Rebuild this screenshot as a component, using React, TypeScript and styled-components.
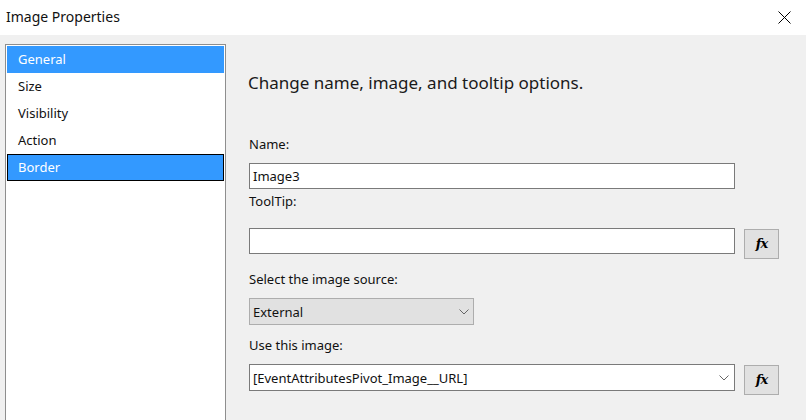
import React from "react";
import styled, { createGlobalStyle } from "styled-components";

const GlobalStyle = createGlobalStyle`
  html, body {
    margin: 0;
    padding: 0;
    background: #f0f0f0;
  }
  body {
    font-family: "Noto Sans", "Open Sans", sans-serif;
    color: #111;
    overflow: hidden;
  }
`;

const Dialog = styled.div`
  width: 806px;
  height: 420px;
  display: flex;
  flex-direction: column;
  overflow: hidden;
`;

const TitleBar = styled.div`
  height: 35px;
  flex: none;
  background: #fff;
  display: flex;
  align-items: center;
  justify-content: space-between;
  padding: 0 15px 2px 6px;
  box-sizing: border-box;
  font-size: 14px;
`;

const CloseIcon = styled.svg`
  width: 13px;
  height: 13px;
  display: block;
  margin-top: 1px;
`;

const Body = styled.div`
  flex: 1;
  display: flex;
  padding-top: 9px;
  padding-left: 5px;
`;

const Sidebar = styled.ul`
  width: 221px;
  height: 420px;
  flex: none;
  box-sizing: border-box;
  margin: 0;
  padding: 1px;
  list-style: none;
  background: #fff;
  border: 1px solid #8e8e8e;
`;

const NavItem = styled.li<{ $selected?: boolean; $focused?: boolean }>`
  height: 27px;
  box-sizing: border-box;
  display: flex;
  align-items: center;
  padding-left: ${(p) => (p.$focused ? "10px" : "11px")};
  padding-bottom: 2px;
  font-size: 13px;
  background: ${(p) => (p.$selected ? "#3399ff" : "transparent")};
  color: ${(p) => (p.$selected ? "#fff" : "#111")};
  border: ${(p) => (p.$focused ? "1px solid #000" : "none")};
`;

const Content = styled.div`
  flex: 1;
  padding: 0 27px 0 23px;
  display: flex;
  flex-direction: column;
`;

const Heading = styled.h1`
  margin: 27px 0 0 -1px;
  height: 24px;
  line-height: 24px;
  font-size: 17px;
  font-weight: 400;
  color: #1a1a1a;
`;

const Label = styled.label<{ $top: number; $bottom: number }>`
  display: block;
  height: 18px;
  line-height: 18px;
  font-size: 13px;
  margin-top: ${(p) => p.$top}px;
  margin-bottom: ${(p) => p.$bottom}px;
`;

const Row = styled.div`
  display: flex;
  align-items: flex-start;
  gap: 9px;
`;

const TextBox = styled.div<{ $height?: number }>`
  width: 486px;
  height: ${(p) => p.$height ?? 26}px;
  box-sizing: border-box;
  border: 1px solid #7a7a7a;
  background: #fff;
  display: flex;
  align-items: center;
  justify-content: space-between;
  padding: 0 5px 0 3px;
  font-size: 13px;
`;

const FxButton = styled.button`
  width: 35px;
  height: 30px;
  margin-top: 1px;
  padding: 0 0 2px;
  box-sizing: border-box;
  border: 1px solid #adadad;
  background: #e1e1e1;
  font-family: "DejaVu Serif", "Liberation Serif", serif;
  font-size: 13px;
  font-weight: 700;
  font-style: italic;
  letter-spacing: -1px;
  color: #000;
`;

const SelectBox = styled.div`
  width: 225px;
  height: 27px;
  box-sizing: border-box;
  border: 1px solid #adadad;
  background: #e1e1e1;
  display: flex;
  align-items: center;
  justify-content: space-between;
  padding: 0 4px 0 3px;
  font-size: 13px;
`;

const Chevron = styled.svg`
  width: 10px;
  height: 6px;
  display: block;
  flex: none;
`;

function ChevronDown() {
  return (
    <Chevron viewBox="0 0 10 6">
      <path d="M0.5 0.5 L5 5 L9.5 0.5" fill="none" stroke="#666" strokeWidth="1" />
    </Chevron>
  );
}

const navItems = ["General", "Size", "Visibility", "Action", "Border"];

export default function App() {
  return (
    <>
      <GlobalStyle />
      <Dialog>
        <TitleBar>
          <span>Image Properties</span>
          <CloseIcon viewBox="0 0 13 13">
            <path d="M0.5 0.5 L12.5 12.5 M12.5 0.5 L0.5 12.5" stroke="#000" strokeWidth="1" fill="none" />
          </CloseIcon>
        </TitleBar>
        <Body>
          <Sidebar>
            {navItems.map((item) => (
              <NavItem
                key={item}
                $selected={item === "General" || item === "Border"}
                $focused={item === "Border"}
              >
                {item}
              </NavItem>
            ))}
          </Sidebar>
          <Content>
            <Heading>Change name, image, and tooltip options.</Heading>
            <Label $top={40} $bottom={10}>Name:</Label>
            <TextBox>Image3</TextBox>
            <Label $top={3} $bottom={18}>ToolTip:</Label>
            <Row>
              <TextBox />
              <FxButton>fx</FxButton>
            </Row>
            <Label $top={11} $bottom={10}>Select the image source:</Label>
            <SelectBox>
              External
              <ChevronDown />
            </SelectBox>
            <Label $top={11} $bottom={10}>Use this image:</Label>
            <Row>
              <TextBox $height={27}>
                [EventAttributesPivot_Image__URL]
                <ChevronDown />
              </TextBox>
              <FxButton>fx</FxButton>
            </Row>
          </Content>
        </Body>
      </Dialog>
    </>
  );
}
